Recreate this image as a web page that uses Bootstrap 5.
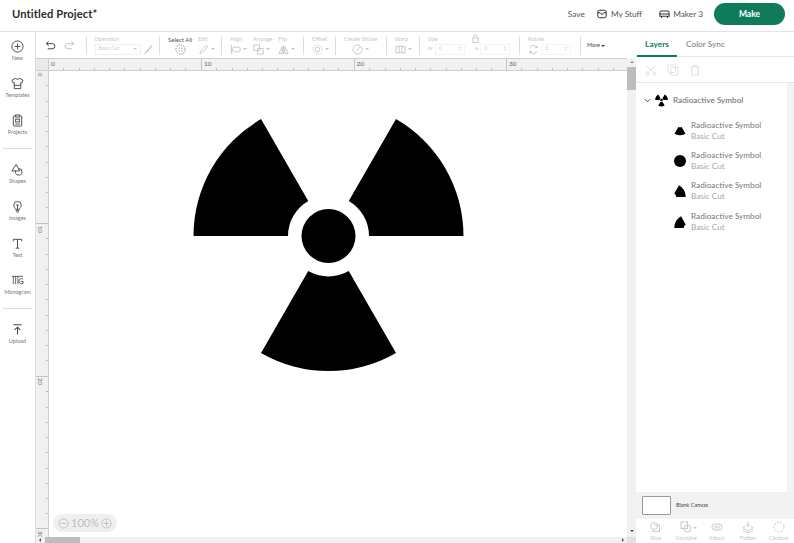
<!DOCTYPE html>
<html lang="en">
<head>
<meta charset="utf-8">
<title>Untitled Project</title>
<link href="https://cdn.jsdelivr.net/npm/bootstrap@5.3.0/dist/css/bootstrap.min.css" rel="stylesheet">
<style>
html,body{margin:0;height:100%;overflow:hidden;background:#fff}
body{font-family:Lato,"Liberation Sans",sans-serif;color:#3d3d3d}
.shell{height:543px;width:794px}
.hdr{height:32px;border-bottom:1px solid #e3e3e3;padding:0 9px 3px 12px}
.ttl{font-size:11.2px;font-weight:700;color:#2c2c2c;letter-spacing:.1px}
.hlink{font-size:8.3px;color:#555;line-height:1}
.hsave{margin-right:12px}
.hmy{margin-right:17px;gap:4px}
.hmk{margin-right:11px;gap:3px}
.makebtn{width:71px;height:22px;padding:0;border:0;border-radius:11px;background:#0f7b5a;color:#fff;font-size:8.5px;font-weight:700;line-height:22px}
.makebtn:hover{background:#0f7b5a;color:#fff}
.mid{height:511px}
.rail{width:36px;border-right:1px solid #dedede;padding-top:1.5px}
.railitem{height:37px;color:#444;padding-top:6px}
.railitem svg{width:13px;height:13px;display:block}
.railitem span{font-size:5.5px;color:#777;line-height:8px;margin-top:1px}
.railsep{height:1px;background:#dcdcdc;margin:3.5px 3px 7.5px}
.workarea{width:600px;min-width:0;overflow:hidden}
.tbar{height:26px;display:grid;grid-template-columns:49.5px 73.5px 62px 82px 32px 51px 33px 100px 61px 56px;align-items:center;flex:none}
.tgrp{height:19px;border-left:1px solid #dddddd;padding-left:8px;display:flex;gap:6px;margin-top:1px;min-width:0}
.tgrp.first{border-left:0;padding-left:9px;gap:8px;align-items:center}
.tgrp.wide{gap:10px}
.tcell{display:flex;flex-direction:column;color:#c4c4c4}
.tcell b{font-weight:400;font-size:5.5px;line-height:7px;color:#c6c6c6;white-space:nowrap;height:7px}
.tcell b.on{color:#555;font-size:6px}
.tcell svg{width:11px;height:11px;display:block}
.tcell svg.lk{width:7px;height:9px;margin:-2px 0 0 -3px}
.tic{display:flex;align-items:center;gap:2px;height:12px;font-size:4.5px}
.sel{width:46px;height:11px;border:1px solid #f0f0f0;font-size:5px;color:#cdcdcd;display:flex;align-items:center;justify-content:space-between;padding:0 3px}
.num{width:30px;height:11px;border:1px solid #f3f3f3;font-size:5px;color:#d0d0d0;display:flex;align-items:center;justify-content:space-between;padding:0 2px}
.more{font-size:5.5px;color:#444;padding-left:6px;align-items:center;gap:1px}
.carr{display:inline-block;border-left:2px solid transparent;border-right:2px solid transparent;border-top:2.5px solid currentColor}
.view{height:479px;flex:none}
.vleft{min-width:0;min-height:0;overflow:hidden}
.hrule{height:13px;background:#f1f1f1;border-top:1px solid #cfcfcf;border-bottom:1px solid #cfcfcf;flex:none}
.corner{width:13px;background:#eaeaea;border-right:1px solid #cfcfcf;flex:none}
.hcell{width:152.5px;flex:none;border-left:1px solid #c4c4c4;font-size:6.5px;line-height:10px;color:#666;padding-left:2px;background:repeating-linear-gradient(90deg,transparent 0,transparent 14.25px,#bdbdbd 14.25px,#bdbdbd 15.25px) 0 100%/100% 2px no-repeat}
.hcell.zero{width:152px;border-left:0}
.vbody{min-height:0;height:466px;flex:none}
.vrule{width:13px;flex:none;background:#f1f1f1;border-right:1px solid #cfcfcf}
.vcell{height:152.5px;border-top:1px solid #c4c4c4;font-size:6px;color:#666;background:repeating-linear-gradient(180deg,transparent 0,transparent 14.25px,#bdbdbd 14.25px,#bdbdbd 15.25px) 100% 0/2px 100% no-repeat}
.vcell.zero{height:152px;border-top:0}
.vcell span{display:block;writing-mode:vertical-rl;line-height:9px;width:9px;padding-top:1.5px}
.stage{background:#fff;min-width:0}
.art{position:absolute;left:0;top:0;width:577px;height:466px}
.zoomer{position:absolute;left:4px;top:443px;width:64px;height:18px;border-radius:9px;background:#efefef;color:#c0c0c0;font-size:11px;gap:2px}
.zoomer svg{width:11px;height:11px}
.vtrack{width:9px;flex:none;background:#f1f1f1;padding-top:9px;position:relative}
.vthumb{height:23px;background:#bdbdbd}
.vtrack i{position:absolute;left:2.5px;border-left:2px solid transparent;border-right:2px solid transparent}
.vup{top:3px;border-bottom:2.5px solid #8a8a8a}
.vdn{bottom:5px;border-top:2.5px solid #444}
.htrack{height:6px;background:#f1f1f1;flex:none;padding-left:2.5px}
.harr{border-top:2px solid transparent;border-bottom:2px solid transparent;align-self:center;flex:none}
.harrl{border-right:2.5px solid #555;margin-right:4px}
.harrr{border-left:2.5px solid #555;margin-right:3px}
.hthumb{width:35px;height:6px;background:#bdbdbd;flex:none}
.hcorner{width:9px;height:6px;background:#e2e2e2;flex:none}
.panel{width:158px;min-width:0}
.ptabs{height:25px;border-bottom:1px solid #e6e6e6;font-size:8.3px;padding-left:1px}
.ptab{width:40px;color:#0f7b5a;font-weight:700;text-align:center;height:25px;line-height:24px;border-bottom:2px solid #0f7b5a}
.ptab2{margin-left:9px;color:#777;line-height:24px}
.pacts{height:26px;border-bottom:1px solid #e8e8e8;padding-left:9px;gap:10px;color:#e0e0e0}
.pacts svg{width:12px;height:12px}
.plist{flex:1 1 0;min-height:0;border-right:7px solid #f3f3f3}
.lgroup{height:33px;padding:2px 0 0 8px;font-size:8.2px;color:#666;flex:none}
.lgroup .chev{width:7px;height:7px;margin-right:4px;flex:none}
.lgroup .gi{width:13px;height:13px;margin-right:5px;flex:none}
.litem{height:30.2px;padding:0 0 0 38px;border:0;background:transparent;gap:5px;border-radius:0}
.litem svg{width:12px;height:12px;flex:none}
.lname{font-size:8.2px;line-height:11px;color:#777;white-space:nowrap}
.lsub{font-size:8.2px;line-height:11px;color:#a6a6a6}
.blank{height:27px;background:#f2f2f2;padding-left:6px;gap:5px;font-size:5.5px;color:#444}
.swatch{width:29px;height:19px;background:#fff;border:1px solid #9a9a9a;border-radius:1px;flex:none}
.pfoot{height:24px;padding:2px 0 0 4px;color:#cacaca}
.pf{width:31px;font-size:5.5px;color:#c8c8c8;line-height:8px}
.pf svg{width:12px;height:12px;display:block;margin-bottom:1px}
.pfi{display:flex;align-items:center;gap:1px;margin-right:-5px}
</style>
</head>
<body>
<svg width="0" height="0" class="position-absolute">
<defs>
<path id="bL" d="M193.5 236A135 135 0 0 1 261 119.1L308.25 201A40.5 40.5 0 0 0 288 236Z"/>
<path id="bR" d="M463.5 236A135 135 0 0 0 396 119.1L348.75 201A40.5 40.5 0 0 1 369 236Z"/>
<path id="bB" d="M261 352.9A135 135 0 0 0 396 352.9L348.75 271A40.5 40.5 0 0 1 308.25 271Z"/>
</defs>
</svg>
<div class="shell d-flex flex-column">
  <header class="hdr d-flex align-items-center flex-shrink-0">
    <div class="ttl me-auto">Untitled Project*</div>
    <span class="hlink hsave">Save</span>
    <span class="hlink hmy d-flex align-items-center">
      <svg width="10" height="10" viewBox="0 0 12 12" fill="none" stroke="#333" stroke-width="1.2"><path d="M1 3.5Q1 1.5 3 1.5H9Q11 1.5 11 3.5V8.5Q11 10.5 9 10.5H3Q1 10.5 1 8.5Z"/><path d="M1 4.5L4 4.5 6 7 8 4.5 11 4.5"/></svg>My Stuff</span>
    <span class="hlink hmk d-flex align-items-center">
      <svg width="11" height="9" viewBox="0 0 13 10" fill="none" stroke="#333" stroke-width="1.2"><path d="M1 3Q1 1 3 1H10Q12 1 12 3V7H1Z"/><path d="M1 4.5H12M3 7V9M10 7V9"/></svg>Maker 3</span>
    <button type="button" class="btn makebtn">Make</button>
  </header>
  <div class="mid d-flex flex-shrink-0">
    <nav class="rail flex-shrink-0 d-flex flex-column">
      <div class="railitem d-flex flex-column align-items-center">
        <svg viewBox="0 0 14 14" fill="none" stroke="currentColor" stroke-width="1"><circle cx="7" cy="7" r="6"/><path d="M7 3.8V10.2M3.8 7H10.2"/></svg><span>New</span></div>
      <div class="railitem d-flex flex-column align-items-center">
        <svg viewBox="0 0 14 14" fill="none" stroke="currentColor" stroke-width="1"><path d="M4.5 1.5Q7 3.5 9.5 1.5L13 3.5 11.5 6.5 10.5 6V12.5H3.5V6L2.5 6.5 1 3.5Z"/><path d="M3.5 9H10.5"/></svg><span>Templates</span></div>
      <div class="railitem d-flex flex-column align-items-center">
        <svg viewBox="0 0 14 14" fill="none" stroke="currentColor" stroke-width="1"><rect x="2.5" y="2" width="9" height="11" rx="1"/><rect x="5" y="1" width="4" height="2.2" fill="#fff"/><rect x="5" y="5.5" width="4" height="3"/><path d="M4.5 10.8H9.5"/></svg><span>Projects</span></div>
      <div class="railsep"></div>
      <div class="railitem d-flex flex-column align-items-center">
        <svg viewBox="0 0 14 14" fill="none" stroke="currentColor" stroke-width="1"><path d="M5.5 1.5L1 8.500H9.500Z"/><path d="M5 8.500A3.500 3.500 0 1 0 8.500 6" /></svg><span>Shapes</span></div>
      <div class="railitem d-flex flex-column align-items-center">
        <svg viewBox="0 0 14 14" fill="none" stroke="currentColor" stroke-width="1"><path d="M5 10C4.500 8.500 3 7.500 3 5.500A4 4 0 0 1 11 5.500C11 7.500 9.500 8.500 9 10Z"/><path d="M5.500 5.500H8.500M7 5.500V10M5 11.500H9M5.700 13H8.300"/></svg><span>Images</span></div>
      <div class="railitem d-flex flex-column align-items-center">
        <svg viewBox="0 0 14 14" fill="none" stroke="currentColor" stroke-width="1"><path d="M2.500 4.500V2.500H11.500V4.500M7 2.500V12M5 12H9"/></svg><span>Text</span></div>
      <div class="railitem d-flex flex-column align-items-center">
        <svg viewBox="0 0 14 14" fill="none" stroke="currentColor" stroke-width=".9"><path d="M1 2.500H13M2.500 2.500V11M5 2.500V11M7.500 2.500V11"/><path d="M13 5.500A2.800 2.800 0 1 0 13 10V8H10.500"/></svg><span>Monogram</span></div>
      <div class="railsep"></div>
      <div class="railitem d-flex flex-column align-items-center">
        <svg viewBox="0 0 14 14" fill="none" stroke="currentColor" stroke-width="1.100"><path d="M2.500 2H11.500M7 12.500V4.500M4 7.500L7 4.500 10 7.500"/></svg><span>Upload</span></div>
    </nav>
    <main class="workarea flex-shrink-0 d-flex flex-column">
      <div class="tbar">
        <div class="tgrp first">
          <svg width="11" height="11" viewBox="0 0 12 12" fill="none" stroke="#333" stroke-width="1"><path d="M4 1.500L1.500 4 4 6.500M1.500 4H8A2.800 2.800 0 0 1 8 9.600H3"/></svg>
          <svg width="11" height="11" viewBox="0 0 12 12" fill="none" stroke="#bbb" stroke-width="1"><path d="M8 1.500L10.500 4 8 6.500M10.500 4H4A2.800 2.800 0 0 0 4 9.600H9"/></svg>
        </div>
        <div class="tgrp">
          <div class="tcell"><b>Operation</b><div class="tic"><div class="sel">Basic Cut<i class="carr"></i></div>
            <svg viewBox="0 0 12 12" fill="none" stroke="#e0b4a4" stroke-width="1.300"><path d="M2 10.500L10 1.500"/></svg></div></div>
        </div>
        <div class="tgrp">
          <div class="tcell"><b class="on">Select All</b><div class="tic justify-content-center">
            <svg viewBox="0 0 12 12" fill="#555" stroke="#555" stroke-width=".8"><circle cx="6" cy="6" r="5" fill="none" stroke-dasharray="1.400 1.200"/><path d="M4 4h1v1H4zM7 4h1v1H7zM4 7h1v1H4zM7 7h1v1H7z" stroke="none"/></svg></div></div>
          <div class="tcell"><b>Edit</b><div class="tic">
            <svg viewBox="0 0 12 12" fill="none" stroke="currentColor"><path d="M2 10.500L3 7.500 9 1.500 10.800 3.200 4.800 9.300Z"/></svg><i class="carr"></i></div></div>
        </div>
        <div class="tgrp">
          <div class="tcell"><b>Align</b><div class="tic">
            <svg viewBox="0 0 12 12" fill="none" stroke="currentColor"><path d="M1.500 1V11"/><rect x="3" y="3.500" width="8" height="5" rx="1"/></svg><i class="carr"></i></div></div>
          <div class="tcell"><b>Arrange</b><div class="tic">
            <svg viewBox="0 0 12 12" fill="none" stroke="currentColor"><rect x="1" y="1" width="6" height="6"/><rect x="5" y="5" width="6" height="6"/></svg><i class="carr"></i></div></div>
          <div class="tcell"><b>Flip</b><div class="tic">
            <svg viewBox="0 0 12 12" fill="none" stroke="currentColor"><path d="M6 1V11M4.500 3L1 10.500H4.500ZM7.500 3L11 10.500H7.500Z"/></svg><i class="carr"></i></div></div>
        </div>
        <div class="tgrp">
          <div class="tcell"><b>Offset</b><div class="tic">
            <svg viewBox="0 0 12 12" fill="none" stroke="currentColor"><circle cx="6" cy="6" r="2.500"/><circle cx="6" cy="6" r="5" stroke-dasharray="1.500 1.300"/></svg><i class="carr"></i></div></div>
        </div>
        <div class="tgrp">
          <div class="tcell"><b>Create Sticker</b><div class="tic justify-content-center">
            <svg viewBox="0 0 12 12" fill="none" stroke="currentColor"><path d="M6 1A5 5 0 1 0 11 6L11 4.500 7.500 1ZM3.500 8.500L9 3"/></svg><i class="carr"></i></div></div>
        </div>
        <div class="tgrp">
          <div class="tcell"><b>Warp</b><div class="tic">
            <svg viewBox="0 0 12 12" fill="none" stroke="currentColor"><path d="M1 3Q6 1.500 11 3M1 10Q6 8.500 11 10M1 3V10M4.500 2.500V9.500M7.500 2.500V9.500M11 3V10"/></svg><i class="carr"></i></div></div>
        </div>
        <div class="tgrp wide">
          <div class="tcell"><b>Size</b><div class="tic">W<div class="num">&nbsp;0<span>&#8597;</span></div></div></div>
          <div class="tcell"><b><svg class="lk" viewBox="0 0 8 10" fill="none" stroke="currentColor"><path d="M2 4.500V2.800A2 2 0 0 1 6 2.800V4.500"/><rect x="1" y="4.500" width="6" height="5"/></svg></b><div class="tic">H<div class="num">&nbsp;0<span>&#8597;</span></div></div></div>
        </div>
        <div class="tgrp">
          <div class="tcell"><b>Rotate</b><div class="tic">
            <svg viewBox="0 0 12 12" fill="none" stroke="currentColor"><path d="M2 4A4.500 4.500 0 0 1 10 4M10 8A4.500 4.500 0 0 1 2 8M10 1.500V4H7.500M2 10.500V8H4.500"/></svg><div class="num">&nbsp;0<span>&#8597;</span></div></div></div>
        </div>
        <div class="tgrp more">More<i class="carr"></i></div>
      </div>
      <div class="view d-flex">
        <div class="vleft flex-fill d-flex flex-column">
          <div class="hrule d-flex overflow-hidden">
            <div class="corner"></div>
            <div class="hcell zero">0</div><div class="hcell">10</div><div class="hcell">20</div><div class="hcell">30</div>
          </div>
          <div class="vbody d-flex overflow-hidden">
            <div class="vrule overflow-hidden">
              <div class="vcell zero"><span>0</span></div><div class="vcell"><span>10</span></div><div class="vcell"><span>20</span></div><div class="vcell"><span>30</span></div>
            </div>
            <div class="stage flex-fill position-relative overflow-hidden">
              <svg class="art" viewBox="49 71 577 466">
                <use href="#bL"/><use href="#bR"/><use href="#bB"/><circle cx="328.500" cy="236" r="27"/>
              </svg>
              <div class="zoomer d-flex align-items-center justify-content-center">
                <svg viewBox="0 0 12 12" fill="none" stroke="currentColor"><circle cx="6" cy="6" r="5"/><path d="M3 6H9"/></svg>
                <span>100%</span>
                <svg viewBox="0 0 12 12" fill="none" stroke="currentColor"><circle cx="6" cy="6" r="5"/><path d="M3 6H9M6 3V9"/></svg>
              </div>
            </div>
          </div>
        </div>
        <div class="vtrack"><i class="vup"></i><div class="vthumb"></div><i class="vdn"></i></div>
      </div>
      <div class="htrack d-flex">
        <i class="harr harrl"></i><div class="hthumb"></div><div class="flex-fill"></div><i class="harr harrr"></i><div class="hcorner"></div>
      </div>
    </main>
    <aside class="panel flex-shrink-0 d-flex flex-column">
      <div class="ptabs d-flex flex-shrink-0">
        <div class="ptab">Layers</div>
        <div class="ptab2">Color Sync</div>
      </div>
      <div class="pacts d-flex align-items-center flex-shrink-0">
        <svg viewBox="0 0 12 12" fill="none" stroke="currentColor"><path d="M2 2L10 10M10 2L2 10"/><circle cx="2.500" cy="9.500" r="1.500"/><circle cx="9.500" cy="9.500" r="1.500"/></svg>
        <svg viewBox="0 0 12 12" fill="none" stroke="currentColor"><rect x="1" y="1" width="7.500" height="7.500" rx="1"/><rect x="3.500" y="3.500" width="7.500" height="7.500" rx="1"/></svg>
        <svg viewBox="0 0 12 12" fill="none" stroke="currentColor"><path d="M1.500 3H10.500M4.500 3V1.500H7.500V3M2.500 3L3 11H9L9.500 3"/></svg>
      </div>
      <div class="plist d-flex flex-column">
        <div class="lgroup d-flex align-items-center">
          <svg class="chev" viewBox="0 0 8 8" fill="none" stroke="#333" stroke-width="1"><path d="M1 2.500L4 5.500 7 2.500"/></svg>
          <svg class="gi" viewBox="190 115 277 260"><use href="#bL"/><use href="#bR"/><use href="#bB"/><circle cx="328.500" cy="236" r="27"/></svg>
          <span>Radioactive Symbol</span>
        </div>
        <div class="list-group list-group-flush">
          <div class="list-group-item litem d-flex align-items-center">
            <svg viewBox="255 265 147 110"><use href="#bB"/></svg>
            <div><div class="lname">Radioactive Symbol</div><div class="lsub">Basic Cut</div></div>
          </div>
          <div class="list-group-item litem d-flex align-items-center">
            <svg viewBox="0 0 12 12"><circle cx="6" cy="6" r="6"/></svg>
            <div><div class="lname">Radioactive Symbol</div><div class="lsub">Basic Cut</div></div>
          </div>
          <div class="list-group-item litem d-flex align-items-center">
            <svg viewBox="346 117 120 120"><use href="#bR"/></svg>
            <div><div class="lname">Radioactive Symbol</div><div class="lsub">Basic Cut</div></div>
          </div>
          <div class="list-group-item litem d-flex align-items-center">
            <svg viewBox="191 117 120 120"><use href="#bL"/></svg>
            <div><div class="lname">Radioactive Symbol</div><div class="lsub">Basic Cut</div></div>
          </div>
        </div>
      </div>
      <div class="blank d-flex align-items-center flex-shrink-0">
        <div class="swatch"></div><span>Blank Canvas</span>
      </div>
      <div class="pfoot d-flex flex-shrink-0">
        <div class="pf d-flex flex-column align-items-center">
          <svg viewBox="0 0 12 12" fill="none" stroke="currentColor"><circle cx="5" cy="5" r="3.500"/><path d="M5 4H10.500V10.500H4V8.500"/></svg>Slice</div>
        <div class="pf d-flex flex-column align-items-center">
          <div class="pfi"><svg viewBox="0 0 12 12" fill="none" stroke="currentColor"><rect x="1" y="1" width="6.500" height="6.500"/><circle cx="7.500" cy="7.500" r="3.500"/></svg><i class="carr"></i></div>Combine</div>
        <div class="pf d-flex flex-column align-items-center">
          <svg viewBox="0 0 12 12" fill="none" stroke="currentColor"><rect x="1" y="3" width="10" height="6" rx="3"/><path d="M4 4.500V7.500M6 4.500V7.500M8 4.500V7.500"/></svg>Attach</div>
        <div class="pf d-flex flex-column align-items-center">
          <svg viewBox="0 0 12 12" fill="none" stroke="currentColor"><path d="M6 0.500V5M4 3.500L6 5.500 8 3.500M3 5.500L1 7 6 10 11 7 9 5.500M1 9.500L6 12 11 9.500"/></svg>Flatten</div>
        <div class="pf d-flex flex-column align-items-center">
          <svg viewBox="0 0 12 12" fill="none" stroke="currentColor"><circle cx="6" cy="6" r="5" stroke-dasharray="2 1.500"/></svg>Contour</div>
      </div>
    </aside>
  </div>
</div>
</body>
</html>
